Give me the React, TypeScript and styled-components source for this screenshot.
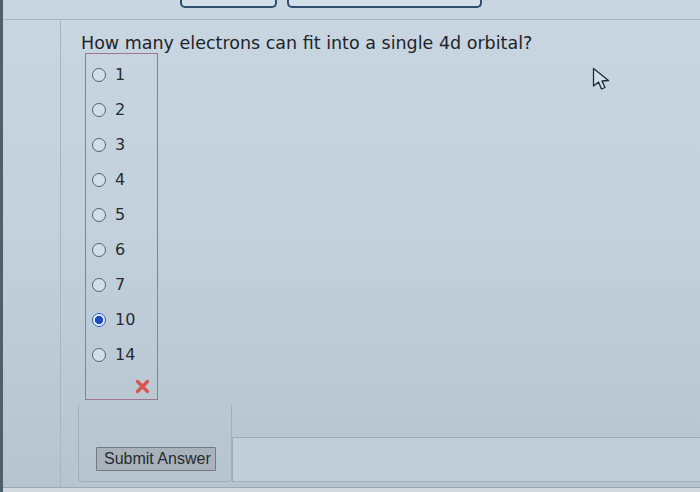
import styled, { createGlobalStyle } from "styled-components";

const GlobalStyle = createGlobalStyle`
  html, body {
    margin: 0;
    padding: 0;
    background: #b9c8d4;
  }
  #root {
    width: 700px;
    height: 492px;
    overflow: hidden;
  }
`;

const Screen = styled.div`
  width: 700px;
  height: 492px;
  display: flex;
  flex-direction: column;
  background: linear-gradient(180deg, #c8d6e1 0%, #c3d1dd 45%, #b6c4d0 100%);
  border-left: 3px solid #4d6070;
  box-sizing: border-box;
  font-family: "DejaVu Sans", Verdana, sans-serif;
  color: #2a2f36;
`;

const TopStrip = styled.div`
  height: 20px;
  display: flex;
  gap: 10px;
  padding-left: 177px;
  border-bottom: 1px solid #a9b6c1;
  box-sizing: border-box;
  flex-shrink: 0;
`;

const Tab = styled.div<{ $w: number }>`
  width: ${(p) => p.$w}px;
  height: 8px;
  box-sizing: border-box;
  border: 2px solid #2f4d6e;
  border-top: none;
  border-radius: 0 0 5px 5px;
  background: #d3e0ea;
`;

const Body = styled.div`
  flex: 1;
  display: flex;
`;

const Sidebar = styled.div`
  width: 57px;
  border-right: 1px solid #a8b6c2;
  flex-shrink: 0;
`;

const Main = styled.div`
  flex: 1;
  display: flex;
  flex-direction: column;
  padding: 13px 0 0 20px;
  position: relative;
`;

const Question = styled.div`
  font-size: 17.5px;
  line-height: 20px;
  color: #1f242a;
`;

const Choices = styled.div`
  width: 73px;
  height: 347px;
  margin-left: 4px;
  border: 1px solid #9f7590;
  box-sizing: border-box;
  display: flex;
  flex-direction: column;
  padding: 3px 0 0 6px;
`;

const Row = styled.label`
  height: 35px;
  flex-shrink: 0;
  display: flex;
  align-items: center;
  gap: 9px;
  font-size: 16px;
  color: #262c33;
`;

const Radio = styled.span<{ $on?: boolean }>`
  display: block;
  box-sizing: border-box;
  width: 14px;
  height: 14px;
  border-radius: 50%;
  border: 1.6px solid ${(p) => (p.$on ? "#2a5fc4" : "#56616c")};
  background: ${(p) =>
    p.$on ? "radial-gradient(circle, #1c4cc0 0 45%, #e6eefa 52%)" : "#d2dee8"};
  flex-shrink: 0;
`;

const Wrong = styled.svg`
  align-self: flex-end;
  margin: 7px 7px 0 0;
`;

const Footer = styled.div`
  margin-top: 5px;
  display: flex;
  align-items: flex-end;
`;

const SubmitPanel = styled.div`
  width: 154px;
  height: 77px;
  border: 1px solid #a2afba;
  border-top: none;
  border-radius: 0 0 4px 4px;
  box-sizing: border-box;
  padding: 42px 0 0 17px;
  margin-left: -3px;
`;

const SubmitButton = styled.button`
  width: 120px;
  height: 24px;
  font-family: "Liberation Sans", Arial, sans-serif;
  font-size: 16px;
  color: #262b31;
  background: #a9b2ba;
  border: 1px solid #6f7a84;
  border-radius: 1px;
  text-align: left;
  padding: 0 0 0 7px;
`;

const AnswerPanel = styled.div`
  flex: 1;
  height: 45px;
  border-top: 1px solid #9eabb6;
  border-left: 1px solid #9eabb6;
  border-bottom: 1px solid #a2afba;
  box-sizing: border-box;
  background: #c0ced9;
`;

const BottomEdge = styled.div`
  height: 4px;
  background: #d2d9df;
  border-top: 1px solid #9ba8b3;
  flex-shrink: 0;
`;

const Cursor = styled.svg`
  position: absolute;
  left: 531px;
  top: 47px;
`;

const options = ["1", "2", "3", "4", "5", "6", "7", "10", "14"];

export default function App() {
  return (
    <>
      <GlobalStyle />
      <Screen>
        <TopStrip>
          <Tab $w={97} />
          <Tab $w={195} />
        </TopStrip>
        <Body>
          <Sidebar />
          <Main>
            <Question>How many electrons can fit into a single 4d orbital?</Question>
            <Choices>
              {options.map((o) => (
                <Row key={o}>
                  <Radio $on={o === "10"} />
                  {o}
                </Row>
              ))}
              <Wrong width="15" height="15" viewBox="0 0 15 15">
                <path
                  d="M2.5 2.5 L12.5 12.5 M12.5 2.5 L2.5 12.5"
                  stroke="#d6564f"
                  strokeWidth="3.4"
                  strokeLinecap="round"
                />
              </Wrong>
            </Choices>
            <Footer>
              <SubmitPanel>
                <SubmitButton>Submit Answer</SubmitButton>
              </SubmitPanel>
              <AnswerPanel />
            </Footer>
            <Cursor width="20" height="28" viewBox="0 0 20 28">
              <path
                d="M1.5 1.5 L1.5 19 L6.5 15 L9.5 22 L13 20.5 L10 14 L16.5 13.5 Z"
                fill="#d3dfe9"
                stroke="#1e2a36"
                strokeWidth="1.3"
                strokeLinejoin="round"
              />
            </Cursor>
          </Main>
        </Body>
        <BottomEdge />
      </Screen>
    </>
  );
}
